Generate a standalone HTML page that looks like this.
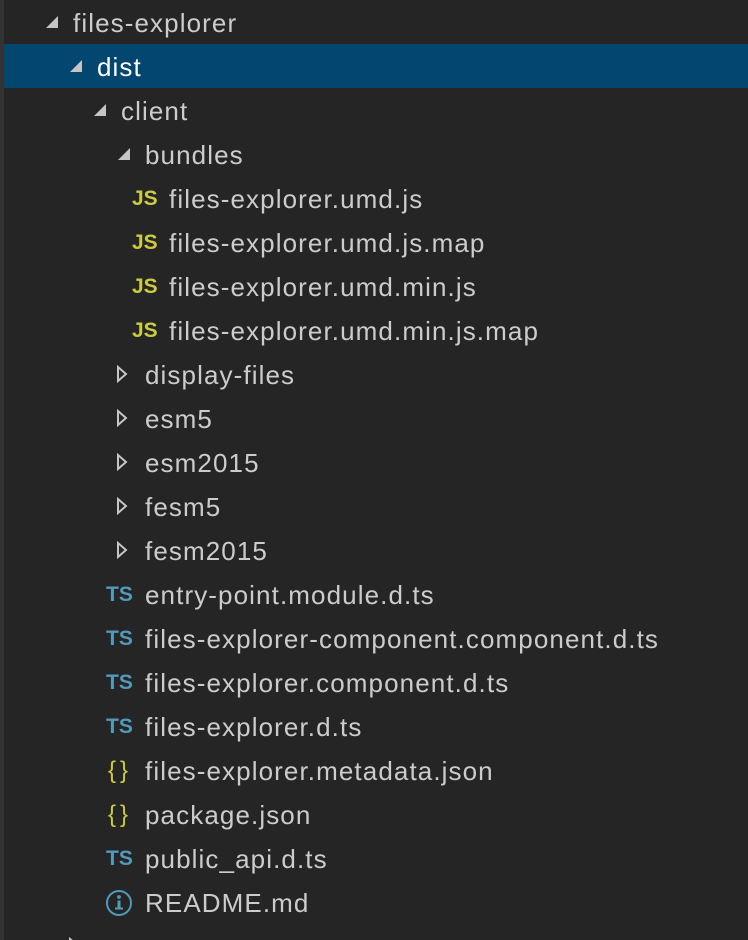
<!DOCTYPE html>
<html style="height:940px;overflow:hidden"><head><meta charset="utf-8"><style>
body{margin:0;width:748px;height:940px;background:#252526;overflow:hidden;font-family:"Liberation Sans",sans-serif;font-size:26px;letter-spacing:1.1px;color:#cccccc;position:relative}
.strip{position:absolute;left:0;top:0;width:4px;height:940px;background:#333334}
.row{position:absolute;left:4px;right:0;height:44px;line-height:46px;white-space:nowrap}
.sel{background:#03466f;color:#fff}
.t{position:absolute;top:0}
.ic{position:absolute;top:0;font-weight:bold;font-size:21px;letter-spacing:0}
.js{color:#cbcb41}
.ts{color:#519aba}
.tri{position:absolute;top:15px}
</style></head><body>
<div class="strip"></div>
<div id="c"></div>
<script>
var rows=[
[0,'o','files-explorer'],[1,'o','dist',1],[2,'o','client'],[3,'o','bundles'],
[4,'js','files-explorer.umd.js'],[4,'js','files-explorer.umd.js.map'],[4,'js','files-explorer.umd.min.js'],[4,'js','files-explorer.umd.min.js.map'],
[3,'c','display-files'],[3,'c','esm5'],[3,'c','esm2015'],[3,'c','fesm5'],[3,'c','fesm2015'],
[3,'ts','entry-point.module.d.ts'],[3,'ts','files-explorer-component.component.d.ts'],[3,'ts','files-explorer.component.d.ts'],[3,'ts','files-explorer.d.ts'],
[3,'json','files-explorer.metadata.json'],[3,'json','package.json'],[3,'ts','public_api.d.ts'],[3,'info','README.md'],[1,'c','src']
];
var h='';
rows.forEach(function(r,i){
 var lvl=r[0],k=r[1],name=r[2];
 var tx=69+lvl*24;
 var s='<div class="row'+(r[3]?' sel':'')+'" style="top:'+(i*44)+'px">';
 if(k=='o'){var x=tx-28;s+='<svg class="tri" style="left:'+x+'px" width="14" height="14"><polygon points="13,1 13,13 1,13" fill="#c5c5c5"/></svg>';}
 else if(k=='c'){var x=tx-29;s+='<svg class="tri" style="left:'+x+'px;top:13px" width="12" height="18"><polygon points="2,2 10,9 2,16" fill="none" stroke="#c5c5c5" stroke-width="2"/></svg>';}
 else {
  var ix=tx-37;
  if(k=='js')s+='<span class="ic js" style="left:'+ix+'px">JS</span>';
  if(k=='ts')s+='<span class="ic ts" style="left:'+(ix-2)+'px">TS</span>';
  if(k=='json')s+='<span class="ic js" style="left:'+ix+'px;font-size:24px;letter-spacing:4px;font-weight:normal">{}</span>';
  if(k=='info')s+='<svg style="position:absolute;left:'+(ix-3)+'px;top:9px" width="28" height="28"><circle cx="14" cy="14" r="12" fill="none" stroke="#519aba" stroke-width="2"/><circle cx="14" cy="8" r="1.9" fill="#519aba"/><rect x="12.5" y="11.5" width="3" height="8" fill="#519aba"/><rect x="10" y="18.5" width="8" height="2" fill="#519aba"/></svg>';
 }
 s+='<span class="t" style="left:'+tx+'px">'+name+'</span></div>';
 h+=s;
});
document.getElementById('c').innerHTML=h;
</script>
</body></html>
